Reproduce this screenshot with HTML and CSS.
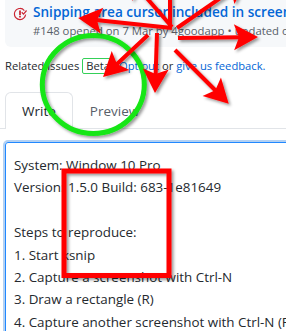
FILE: index.html
```html
<!DOCTYPE html>
<html>
<head>
<meta charset="utf-8">
<link rel="stylesheet" href="styles.css">
</head>
<body>
<div class="page">
  <div class="card">
    <svg class="issue-icon" viewBox="0 0 16 16" width="14" height="14"><path d="M7 10h2v2H7v-2zm2-6H7v5h2V4zm1.5 1.5l-1 1L12 9l4-4.5-1-1L12 7l-1.5-1.5zM8 13.7A5.71 5.71 0 012.3 8c0-3.14 2.56-5.7 5.7-5.7 1.830 0 3.45.88 4.5 2.2l.92-.92A6.947 6.947 0 008 1C4.14 1 1 4.14 1 8s3.14 7 7 7 7-3.140 7-7l-1.52 1.52c-.66 2.41-2.86 4.19-5.48 4.19v-.01z"/></svg>
    <div class="card-text">
      <div class="card-title">Snipping area cursor included in screenshot</div>
      <div class="card-meta">#148 opened on 7 Mar by 4goodapp • updated on 8 Mar</div>
    </div>
  </div>
  <div class="related">
    <span class="related-label">Related issues</span>
    <span class="beta">Beta</span>
    <span class="link">Opt out</span>
    <span class="or">or</span>
    <span class="link">give us feedback.</span>
  </div>
  <div class="tabs">
    <div class="tab active">Write</div>
    <div class="tab">Preview</div>
  </div>
  <div class="editor">
    <div class="line">System: Window 10 Pro</div>
    <div class="line">Version: 1.5.0 Build: 683-1e81649</div>
    <div class="line">&nbsp;</div>
    <div class="line">Steps to reproduce:</div>
    <div class="line">1. Start ksnip</div>
    <div class="line">2. Capture a screenshot with Ctrl-N</div>
    <div class="line">3. Draw a rectangle (R)</div>
    <div class="line">4. Capture another screenshot with Ctrl-N (P)</div>
  </div>
  <svg class="annotations" width="286" height="331" viewBox="0 0 286 331">
    <defs>
      <filter id="sh" x="-30%" y="-30%" width="160%" height="160%">
        <feDropShadow dx="2" dy="2" stdDeviation="1.4" flood-color="#000" flood-opacity="0.4"/>
      </filter>
      <marker id="ah" markerUnits="userSpaceOnUse" markerWidth="26" markerHeight="28" refX="6" refY="13" orient="auto" overflow="visible">
        <path d="M0 0 L24 13 L0 26 L5 13 Z" fill="#ff0000"/>
      </marker>
    </defs>
    <g filter="url(#sh)">
      <ellipse cx="93.3" cy="84.5" rx="51" ry="49" fill="none" stroke="#14e614" stroke-width="5"/>
      <rect x="64" y="171" width="105" height="104.5" fill="none" stroke="#ff0000" stroke-width="5"/>
    </g>
    <g filter="url(#sh)" stroke="#ff0000" stroke-width="4" marker-end="url(#ah)">
      <line x1="172" y1="28" x2="96" y2="20"/>
      <line x1="170" y1="28" x2="170" y2="-12"/>
      <line x1="172" y1="27" x2="138" y2="-12"/>
      <line x1="177" y1="28" x2="232" y2="-10"/>
      <line x1="178" y1="38" x2="240" y2="37.2"/>
      <line x1="175" y1="50" x2="216" y2="91"/>
      <line x1="157" y1="33" x2="155.6" y2="75"/>
      <line x1="148" y1="35" x2="116.2" y2="64.7"/>
    </g>
  </svg>
</div>
</body>
</html>
```
FILE: styles.css
```css
html, body {
  margin: 0;
  padding: 0;
  background: #ffffff;
}
.page {
  position: relative;
  width: 286px;
  height: 331px;
  overflow: hidden;
  font-family: "Open Sans", "Noto Sans", sans-serif;
  color: #24292e;
  white-space: nowrap;
}
.card {
  margin-left: 5px;
  width: 420px;
  background: #f6f8fa;
  border-bottom-left-radius: 6px;
  padding: 2px 0 7px 8px;
  display: flex;
  align-items: flex-start;
  gap: 6px;
}
.issue-icon {
  fill: #cb2431;
  margin-top: 5px;
  flex: none;
}
.card-title {
  font-size: 13.6px;
  font-weight: 600;
  line-height: 20px;
  color: #0366d6;
}
.card-meta {
  font-size: 11.3px;
  line-height: 18px;
  color: #586069;
}
.related {
  margin-top: 10px;
  padding-left: 5px;
  height: 18px;
  display: flex;
  align-items: center;
  font-size: 11.2px;
  line-height: 18px;
}
.related-label {
  margin-right: 3px;
}
.beta {
  border: 1px solid #34d058;
  border-radius: 2px;
  padding: 0 3px;
  line-height: 14px;
  margin-right: 5px;
}
.link {
  color: #0366d6;
}
.or {
  margin: 0 3px;
}
.tabs {
  margin-top: 17px;
  padding-left: 5px;
  display: flex;
  height: 36px;
  border-bottom: 1px solid #e1e4e8;
}
.tab {
  padding: 0 16px;
  height: 36px;
  line-height: 36px;
  font-size: 13.5px;
  color: #586069;
  border: 1px solid transparent;
  border-bottom: none;
}
.tab.active {
  color: #24292e;
  background: #ffffff;
  border-color: #e1e4e8;
  border-radius: 6px 6px 0 0;
  margin-bottom: -1px;
}
.editor {
  margin-top: 13px;
  margin-left: 5px;
  width: 420px;
  border: 1px solid #2188ff;
  box-shadow: 0 0 0 2px rgba(3, 102, 214, 0.3);
  border-radius: 3px;
  padding: 11px 8px;
  font-size: 13.4px;
  line-height: 22.4px;
}
.annotations {
  position: absolute;
  left: 0;
  top: 0;
  overflow: visible;
  pointer-events: none;
}
```
